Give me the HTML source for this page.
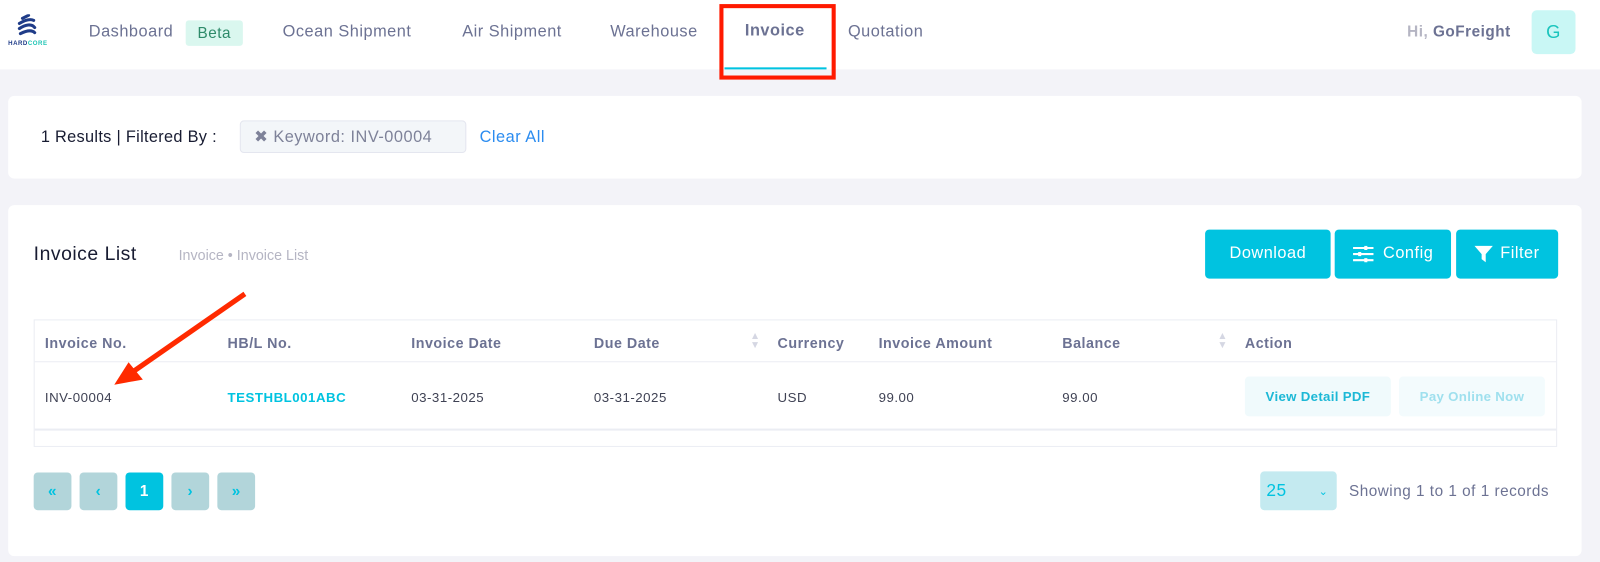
<!DOCTYPE html>
<html><head><style>
*{box-sizing:border-box;margin:0;padding:0}
body{width:1600px;height:562px;background:#f3f3f8;overflow:hidden}
.wrap{position:absolute;left:0;top:0;width:1568px;height:551px;transform:scale(1.020408);transform-origin:0 0;font-family:"Liberation Sans",sans-serif;color:#3f4254;letter-spacing:0.5px}
.abs{position:absolute}
.nav{left:0;top:0;width:1568px;height:68px;background:#fff}
.nl{font-size:16px;color:#6c7293;top:23px}
.card{background:#fff;border-radius:6px}
.btn{background:#00c3e0;color:#fff;font-size:16px;border-radius:4px;display:flex;align-items:center;justify-content:center;height:48px;top:225px}
.th{font-size:14px;font-weight:bold;color:#6c7293;top:328px}
.td{font-size:13px;color:#3f4254;top:382px}
.pg{top:463px;width:37px;height:37px;border-radius:4px;background:#b2d5da;color:#00c3e0;font-weight:bold;font-size:15px;display:flex;align-items:center;justify-content:center}
</style></head><body><div class="wrap">
<div class="abs nav"></div>
<svg class="abs" style="left:8px;top:14px" width="40" height="34" viewBox="0 0 40 34">
<path d="M14 4l6-3M11 9c5-3 10-5 14-3M11 14c6-4 12-5 15-1M12 19c6-3 11-4 14-1" stroke="#1f3c88" stroke-width="3" fill="none" stroke-linecap="round"/>
<text x="0" y="30" font-size="6" font-weight="bold" fill="#1f3c88" font-family="Liberation Sans">HARD<tspan fill="#20c5b5">CORE</tspan></text></svg>
<div class="abs nl" style="left:87px">Dashboard</div>
<div class="abs" style="left:182px;top:20px;width:56px;height:25px;background:#daf7ef;border-radius:3px;color:#2e8b6a;font-size:15px;text-align:center;line-height:25px">Beta</div>
<div class="abs nl" style="left:277px">Ocean Shipment</div>
<div class="abs nl" style="left:453px">Air Shipment</div>
<div class="abs nl" style="left:598px">Warehouse</div>
<div class="abs nl" style="left:730px;top:22px;font-weight:bold">Invoice</div>
<div class="abs" style="left:710px;top:66px;width:100px;height:2px;background:#00c3e0"></div>
<div class="abs" style="left:705px;top:4px;width:114px;height:74px;border:4px solid #ff1a00"></div>
<div class="abs nl" style="left:831px">Quotation</div>
<div class="abs" style="left:1379px;top:23px;font-size:15px;font-weight:bold;color:#b5b5c3">Hi, <span style="color:#6c7293">GoFreight</span></div>
<div class="abs" style="left:1501px;top:10px;width:43px;height:43px;background:#c9f7f5;border-radius:5px;color:#1bc5bd;font-size:18px;text-align:center;line-height:43px">G</div>

<div class="abs card" style="left:8px;top:94px;width:1542px;height:81px"></div>
<div class="abs" style="left:40px;top:126px;font-size:16px;color:#181c32;letter-spacing:0.3px">1 Results | Filtered By :</div>
<div class="abs" style="left:235px;top:118px;width:222px;height:32px;background:#f3f6f9;border:1px solid #e4e6ef;border-radius:4px;font-size:16px;color:#7e8299;line-height:31px;padding-left:13px">✖ Keyword: INV-00004</div>
<div class="abs" style="left:470px;top:126px;font-size:16px;color:#2b8cf0">Clear All</div>

<div class="abs card" style="left:8px;top:201px;width:1542px;height:344px"></div>
<div class="abs" style="left:33px;top:239px;font-size:19px;color:#181c32">Invoice List</div>
<div class="abs" style="left:175px;top:242px;font-size:14px;color:#b5b5c3;letter-spacing:0">Invoice • Invoice List</div>
<div class="abs btn" style="left:1181px;width:123px">Download</div>
<div class="abs btn" style="left:1308px;width:114px"><svg width="22" height="18" viewBox="0 0 22 18" style="margin-right:8px"><path d="M1 3h20M1 9h20M1 15h20" stroke="#fff" stroke-width="2"/><rect x="12" y="1" width="3" height="4" fill="#fff"/><rect x="6" y="7" width="3" height="4" fill="#fff"/><rect x="12" y="13" width="3" height="4" fill="#fff"/></svg>Config</div>
<div class="abs btn" style="left:1427px;width:100px"><svg width="18" height="18" viewBox="0 0 18 18" style="margin-right:7px"><path d="M0 1h18l-7 8v8l-4-3v-5z" fill="#fff"/></svg>Filter</div>

<div class="abs" style="left:33px;top:313px;width:1493px;height:125px;border:1px solid #ebedf3"></div>
<div class="abs" style="left:34px;top:354px;width:1491px;height:1px;background:#ebedf3"></div>
<div class="abs" style="left:34px;top:420px;width:1491px;height:2px;background:#ebedf3"></div>
<div class="abs th" style="left:44px">Invoice No.</div>
<div class="abs th" style="left:223px">HB/L No.</div>
<div class="abs th" style="left:403px">Invoice Date</div>
<div class="abs th" style="left:582px">Due Date</div>
<div class="abs" style="left:735px;top:325px;color:#d5d7e3;font-size:10px;line-height:9px">▲<br>▼</div>
<div class="abs th" style="left:762px">Currency</div>
<div class="abs th" style="left:861px">Invoice Amount</div>
<div class="abs th" style="left:1041px">Balance</div>
<div class="abs" style="left:1193px;top:325px;color:#d5d7e3;font-size:10px;line-height:9px">▲<br>▼</div>
<div class="abs th" style="left:1220px">Action</div>
<div class="abs td" style="left:44px">INV-00004</div>
<div class="abs td" style="left:223px;color:#00c3e0;font-weight:bold">TESTHBL001ABC</div>
<div class="abs td" style="left:403px">03-31-2025</div>
<div class="abs td" style="left:582px">03-31-2025</div>
<div class="abs td" style="left:762px">USD</div>
<div class="abs td" style="left:861px">99.00</div>
<div class="abs td" style="left:1041px">99.00</div>
<div class="abs" style="left:1220px;top:369px;width:143px;height:39px;background:#f0fafc;border-radius:4px;color:#1cb8d6;font-weight:bold;font-size:13px;text-align:center;line-height:39px;letter-spacing:0.3px">View Detail PDF</div>
<div class="abs" style="left:1371px;top:369px;width:143px;height:39px;background:#f3fbfd;border-radius:4px;color:#9fe0ee;font-weight:bold;font-size:13px;text-align:center;line-height:39px;letter-spacing:0.3px">Pay Online Now</div>
<svg class="abs" style="left:100px;top:283px" width="145" height="100"><path d="M140 5L25 85" stroke="#ff2a00" stroke-width="5"/><path d="M12 94l28-5-14-17z" fill="#ff2a00"/></svg>

<div class="abs pg" style="left:33px">«</div>
<div class="abs pg" style="left:78px">‹</div>
<div class="abs pg" style="left:123px;background:#00c3e0;color:#fff">1</div>
<div class="abs pg" style="left:168px">›</div>
<div class="abs pg" style="left:213px">»</div>
<div class="abs" style="left:1235px;top:462px;width:75px;height:38px;background:#c4eaf0;border-radius:4px;color:#00c3e0;font-size:17px;line-height:38px;padding-left:6px">25<span style="position:absolute;right:8px;font-size:11px;top:1px">⌄</span></div>
<div class="abs" style="left:1322px;top:473px;font-size:15px;color:#6c7293">Showing 1 to 1 of 1 records</div>
</div></body></html>
